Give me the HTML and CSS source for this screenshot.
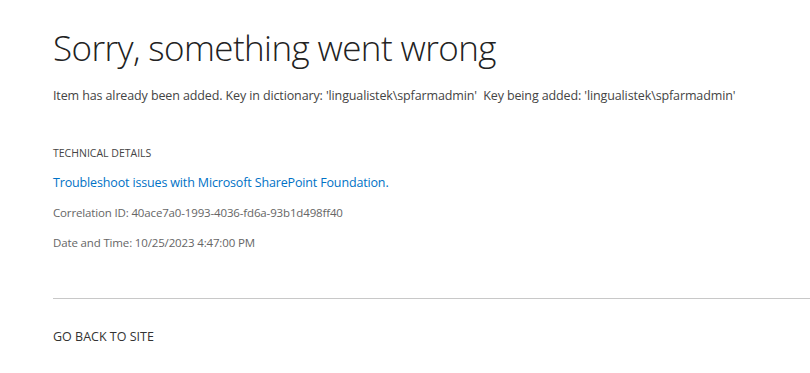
FILE: index.html
```html
<!DOCTYPE html>
<html>
    <head>
        <meta charset="UTF-8">
        <title>Error</title>
        <link rel="stylesheet" href="styles.css">
    </head>
    <body>
        <div class="page">
            <h1 class="title">Sorry, something went wrong</h1>
            <div class="message">Item has already been added. Key in dictionary: 'lingualistek\spfarmadmin'&nbsp; Key being added: 'lingualistek\spfarmadmin'</div>
            <div class="details">
                <div class="details-head">TECHNICAL DETAILS</div>
                <div class="details-link"><a href="#">Troubleshoot issues with Microsoft SharePoint Foundation</a>.</div>
                <div class="details-row">Correlation ID: 40ace7a0-1993-4036-fd6a-93b1d498ff40</div>
                <div class="details-row">Date and Time: 10/25/2023 4:47:00 PM</div>
            </div>
            <div class="sep"></div>
            <div class="back"><a href="#">GO BACK TO SITE</a></div>
        </div>
    </body>
</html>
```

FILE: styles.css
```css
*{ margin:0; padding:0; }
body{
    font-family: "Open Sans", "Noto Sans", sans-serif;
    background: #fff;
}
.page{
    padding: 26px 0 0 53px;
}
.title{
    font-size: 35px;
    font-weight: 300;
    letter-spacing: -0.6px;
    color: #222;
    line-height: 44px;
}
.message{
    font-size: 12.5px;
    letter-spacing: -0.12px;
    color: #444;
    margin-top: 16px;
    line-height: 20px;
}
.details{
    margin-top: 39px;
}
.details-head{
    font-size: 10.5px;
    color: #444;
    line-height: 16px;
}
.details-link{
    font-size: 12.5px;
    letter-spacing: -0.15px;
    color: #0072c6;
    margin-top: 12px;
    line-height: 20px;
}
.details-link a{
    color: #0072c6;
    text-decoration: none;
}
.details-row{
    font-size: 11.5px;
    letter-spacing: -0.15px;
    color: #666;
    margin-top: 10px;
    line-height: 20px;
}
.sep{
    border-top: 1px solid #c8c8c8;
    margin-top: 45px;
}
.back{
    font-size: 12.5px;
    margin-top: 28px;
    line-height: 20px;
}
.back a{
    color: #333;
    text-decoration: none;
}
```
